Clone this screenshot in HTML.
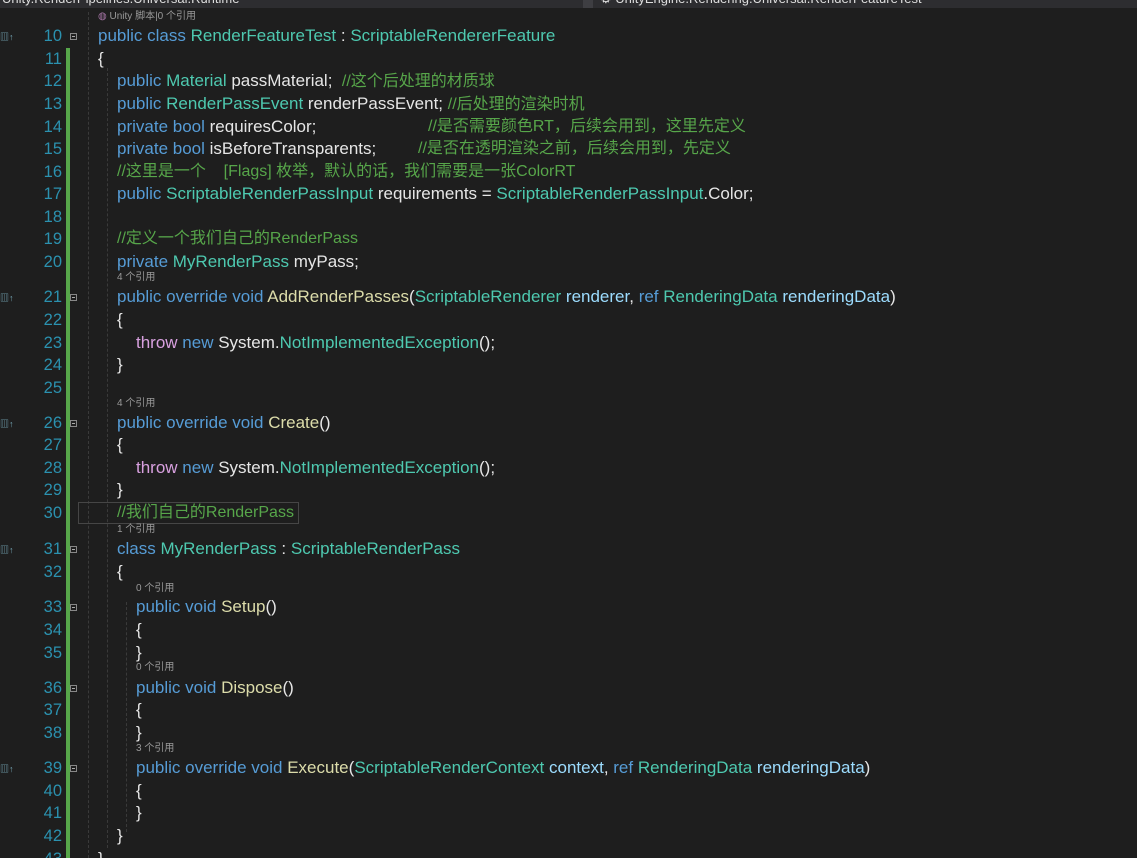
<!DOCTYPE html><html style="overflow:hidden;height:858px"><head><meta charset="utf-8"><style>
body{margin:0;width:1137px;height:858px;background:#1e1e1e;overflow:hidden;position:relative;font-family:"Segoe UI","Liberation Sans","Noto Sans CJK SC",sans-serif;}
.top{position:absolute;left:0;top:0;width:1137px;height:8px;background:#2d2d30;overflow:hidden}
.top span{position:absolute;top:-9px;font-size:13px;color:#ddd}
.ln{position:absolute;width:62px;text-align:right;font-size:16.5px;color:#2b91af;line-height:20px}
.c{position:absolute;font-size:17px;line-height:20px;color:#e6e6e6;white-space:pre}
.l{position:absolute;font-size:10px;color:#999;line-height:12px;white-space:pre}
.k{color:#569cd6}.t{color:#4ec9b0}.m{color:#dcdcaa}.g{color:#57a64a;font-size:16px}.p{color:#9cdcfe}.f{color:#d8a0df}
.fold{position:absolute;left:70px;width:7px;height:7px;border:1px solid #888;box-sizing:border-box}
.fold:after{content:"";position:absolute;left:1px;top:2px;width:3px;height:1px;background:#aaa}
.ic{position:absolute;left:0;font-size:9px;color:#7ab}
</style></head><body>
<div class="top"><span style="left:2px">Unity.RenderPipelines.Universal.Runtime</span><span style="left:600px">⚙ UnityEngine.Rendering.Universal.RenderFeatureTest</span></div>
<div style="position:absolute;left:583px;top:0;width:10px;height:8px;background:#3e3e42"></div>
<div style="position:absolute;left:66px;top:48px;width:4px;height:810px;background:#57a64a"></div>
<div style="position:absolute;left:88px;top:12px;width:0;height:846px;border-left:1px dashed #3a3a3a"></div>
<div style="position:absolute;left:107px;top:68px;width:0;height:780px;border-left:1px dashed #3a3a3a"></div>
<div style="position:absolute;left:126px;top:602px;width:0;height:230px;border-left:1px dashed #3a3a3a"></div>
<div style="position:absolute;left:78px;top:502px;width:219px;height:20px;border:1px solid #464646"></div>
<div class="ic" style="top:30px">▥↑</div><div class="ic" style="top:291px">▥↑</div><div class="ic" style="top:417px">▥↑</div><div class="ic" style="top:543px">▥↑</div><div class="ic" style="top:762px">▥↑</div>
<div class="fold" style="top:33px"></div><div class="fold" style="top:294px"></div><div class="fold" style="top:420px"></div><div class="fold" style="top:546px"></div><div class="fold" style="top:604px"></div><div class="fold" style="top:685px"></div><div class="fold" style="top:765px"></div>
<div class="l" style="left:98px;top:11px"><span style="color:#a7a">◍</span> Unity 脚本|0 个引用</div>
<div class="l" style="left:117px;top:272px">4 个引用</div>
<div class="l" style="left:117px;top:398px">4 个引用</div>
<div class="l" style="left:117px;top:524px">1 个引用</div>
<div class="l" style="left:136px;top:583px">0 个引用</div>
<div class="l" style="left:136px;top:662px">0 个引用</div>
<div class="l" style="left:136px;top:743px">3 个引用</div>

<div class="ln" style="top:26px">10</div><div class="c" style="left:98px;top:26px"><span class="k">public class </span><span class="t">RenderFeatureTest</span> : <span class="t">ScriptableRendererFeature</span></div>
<div class="ln" style="top:49px">11</div><div class="c" style="left:98px;top:49px">{</div>
<div class="ln" style="top:71px">12</div><div class="c" style="left:117px;top:71px"><span class="k">public </span><span class="t">Material</span> passMaterial;  <span class="g">//这个后处理的材质球</span></div>
<div class="ln" style="top:94px">13</div><div class="c" style="left:117px;top:94px"><span class="k">public </span><span class="t">RenderPassEvent</span> renderPassEvent; <span class="g">//后处理的渲染时机</span></div>
<div class="ln" style="top:117px">14</div><div class="c" style="left:117px;top:117px"><span class="k">private bool </span>requiresColor;</div><div class="c g" style="left:428px;top:117px">//是否需要颜色RT，后续会用到，这里先定义</div>
<div class="ln" style="top:139px">15</div><div class="c" style="left:117px;top:139px"><span class="k">private bool </span>isBeforeTransparents;</div><div class="c g" style="left:418px;top:139px">//是否在透明渲染之前，后续会用到，先定义</div>
<div class="ln" style="top:162px">16</div><div class="c g" style="left:117px;top:162px">//这里是一个    [Flags] 枚举，默认的话，我们需要是一张ColorRT</div>
<div class="ln" style="top:184px">17</div><div class="c" style="left:117px;top:184px"><span class="k">public </span><span class="t">ScriptableRenderPassInput</span> requirements = <span class="t">ScriptableRenderPassInput</span>.Color;</div>
<div class="ln" style="top:207px">18</div>
<div class="ln" style="top:229px">19</div><div class="c g" style="left:117px;top:229px">//定义一个我们自己的RenderPass</div>
<div class="ln" style="top:252px">20</div><div class="c" style="left:117px;top:252px"><span class="k">private </span><span class="t">MyRenderPass</span> myPass;</div>
<div class="ln" style="top:287px">21</div><div class="c" style="left:117px;top:287px"><span class="k">public override void </span><span class="m">AddRenderPasses</span>(<span class="t">ScriptableRenderer</span> <span class="p">renderer</span>, <span class="k">ref </span><span class="t">RenderingData</span> <span class="p">renderingData</span>)</div>
<div class="ln" style="top:310px">22</div><div class="c" style="left:117px;top:310px">{</div>
<div class="ln" style="top:333px">23</div><div class="c" style="left:136px;top:333px"><span class="f">throw </span><span class="k">new </span>System.<span class="t">NotImplementedException</span>();</div>
<div class="ln" style="top:355px">24</div><div class="c" style="left:117px;top:355px">}</div>
<div class="ln" style="top:378px">25</div>
<div class="ln" style="top:413px">26</div><div class="c" style="left:117px;top:413px"><span class="k">public override void </span><span class="m">Create</span>()</div>
<div class="ln" style="top:435px">27</div><div class="c" style="left:117px;top:435px">{</div>
<div class="ln" style="top:458px">28</div><div class="c" style="left:136px;top:458px"><span class="f">throw </span><span class="k">new </span>System.<span class="t">NotImplementedException</span>();</div>
<div class="ln" style="top:480px">29</div><div class="c" style="left:117px;top:480px">}</div>
<div class="ln" style="top:503px">30</div><div class="c g" style="left:117px;top:503px">//我们自己的RenderPass</div>
<div class="ln" style="top:539px">31</div><div class="c" style="left:117px;top:539px"><span class="k">class </span><span class="t">MyRenderPass</span> : <span class="t">ScriptableRenderPass</span></div>
<div class="ln" style="top:562px">32</div><div class="c" style="left:117px;top:562px">{</div>
<div class="ln" style="top:597px">33</div><div class="c" style="left:136px;top:597px"><span class="k">public void </span><span class="m">Setup</span>()</div>
<div class="ln" style="top:620px">34</div><div class="c" style="left:136px;top:620px">{</div>
<div class="ln" style="top:643px">35</div><div class="c" style="left:136px;top:643px">}</div>
<div class="ln" style="top:678px">36</div><div class="c" style="left:136px;top:678px"><span class="k">public void </span><span class="m">Dispose</span>()</div>
<div class="ln" style="top:700px">37</div><div class="c" style="left:136px;top:700px">{</div>
<div class="ln" style="top:723px">38</div><div class="c" style="left:136px;top:723px">}</div>
<div class="ln" style="top:758px">39</div><div class="c" style="left:136px;top:758px"><span class="k">public override void </span><span class="m">Execute</span>(<span class="t">ScriptableRenderContext</span> <span class="p">context</span>, <span class="k">ref </span><span class="t">RenderingData</span> <span class="p">renderingData</span>)</div>
<div class="ln" style="top:781px">40</div><div class="c" style="left:136px;top:781px">{</div>
<div class="ln" style="top:803px">41</div><div class="c" style="left:136px;top:803px">}</div>
<div class="ln" style="top:826px">42</div><div class="c" style="left:117px;top:826px">}</div>
<div class="ln" style="top:849px">43</div><div class="c" style="left:98px;top:849px">}</div>
</body></html>
